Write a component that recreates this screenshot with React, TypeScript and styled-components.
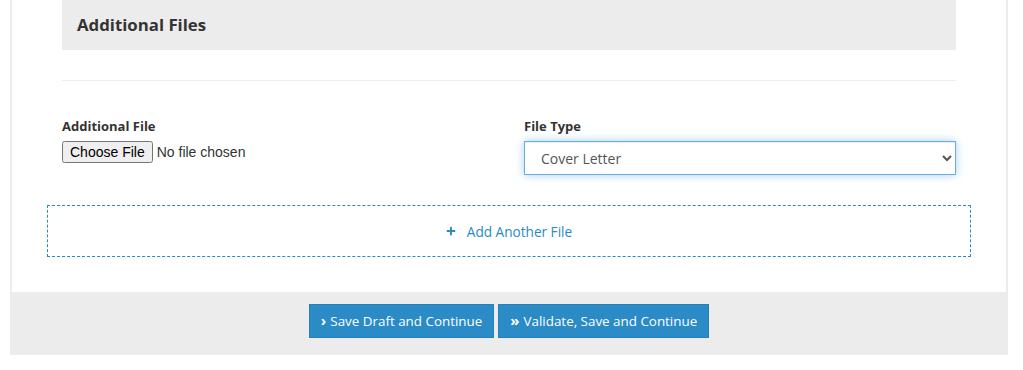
import styled, { createGlobalStyle } from "styled-components";
import { FaPlus } from "react-icons/fa";

const GlobalStyle = createGlobalStyle`
  body {
    margin: 0;
    background: #fff;
    font-family: "Open Sans", "Liberation Sans", Arial, sans-serif;
    color: #333;
  }
`;

const Wrapper = styled.div`
  width: 998px;
  margin-left: 10px;
`;

const Panel = styled.div`
  border-left: 2px solid #ececec;
  border-right: 2px solid #ececec;
  padding: 0 35px 35px;
`;

const Section = styled.div`
  padding: 0 15px;
`;

const SectionHeader = styled.div`
  height: 50px;
  background: #ececec;
  display: flex;
  align-items: center;
  padding: 0 15px 2px;
  box-sizing: border-box;

  h3 {
    margin: 0;
    font-size: 16.8px;
    font-weight: 700;
    color: #333;
  }
`;

const Divider = styled.hr`
  border: 0;
  border-top: 1px solid #eeeeee;
  margin: 30px 0 0;
`;

const Row = styled.div`
  display: grid;
  grid-template-columns: 1fr 1fr;
  margin-top: 36px;
`;

const Col = styled.div`
  padding: 0 15px;
  display: flex;
  flex-direction: column;
`;

const Label = styled.label`
  font-size: 13px;
  font-weight: 700;
  color: #333;
  margin-bottom: 6px;
  line-height: 18px;
`;

const FileInput = styled.input`
  font-size: 14px;
  color: #333;
`;

const Select = styled.select`
  height: 34px;
  width: 100%;
  padding: 6px 8px 6px 12px;
  font-size: 14px;
  font-family: "Open Sans", "Liberation Sans", Arial, sans-serif;
  color: #555;
  background: #fff;
  border: 1px solid #66afe9;
  border-radius: 0;
  outline: none;
  box-shadow: inset 0 1px 1px rgba(0, 0, 0, 0.075), 0 0 8px rgba(102, 175, 233, 0.6);
`;

const AddBox = styled.div`
  margin-top: 30px;
  height: 50px;
  border: 1px dashed #2a8ac6;
  display: flex;
  align-items: center;
  justify-content: center;
  gap: 11px;
  color: #2a8ac6;
  font-size: 13.6px;
  cursor: pointer;

  svg {
    width: 10px;
    height: 10px;
  }
`;

const Footer = styled.div`
  background: #ececec;
  display: flex;
  justify-content: center;
  gap: 4px;
  padding: 12px 0 17px;
`;

const Button = styled.button`
  height: 34px;
  padding: 0 11px;
  background: #2a8bc6;
  border: 1px solid #2680b8;
  border-radius: 0;
  color: #fff;
  font-size: 13.4px;
  font-family: "Open Sans", "Liberation Sans", Arial, sans-serif;
  display: flex;
  align-items: center;
  gap: 4px;
  cursor: pointer;
`;

const Chevron = styled.span`
  font-weight: 700;
  font-size: 15px;
  line-height: 1;
  margin-top: -2px;
`;

export default function App() {
  return (
    <Wrapper>
      <GlobalStyle />
      <Panel>
        <Section>
          <SectionHeader>
            <h3>Additional Files</h3>
          </SectionHeader>
          <Divider />
        </Section>
        <Row>
          <Col>
            <Label>Additional File</Label>
            <FileInput type="file" />
          </Col>
          <Col>
            <Label>File Type</Label>
            <Select defaultValue="cover">
              <option value="cover">Cover Letter</option>
              <option value="other">Other</option>
            </Select>
          </Col>
        </Row>
        <AddBox>
          <FaPlus />
          <span>Add Another File</span>
        </AddBox>
      </Panel>
      <Footer>
        <Button>
          <Chevron>›</Chevron>
          Save Draft and Continue
        </Button>
        <Button>
          <Chevron>»</Chevron>
          Validate, Save and Continue
        </Button>
      </Footer>
    </Wrapper>
  );
}
